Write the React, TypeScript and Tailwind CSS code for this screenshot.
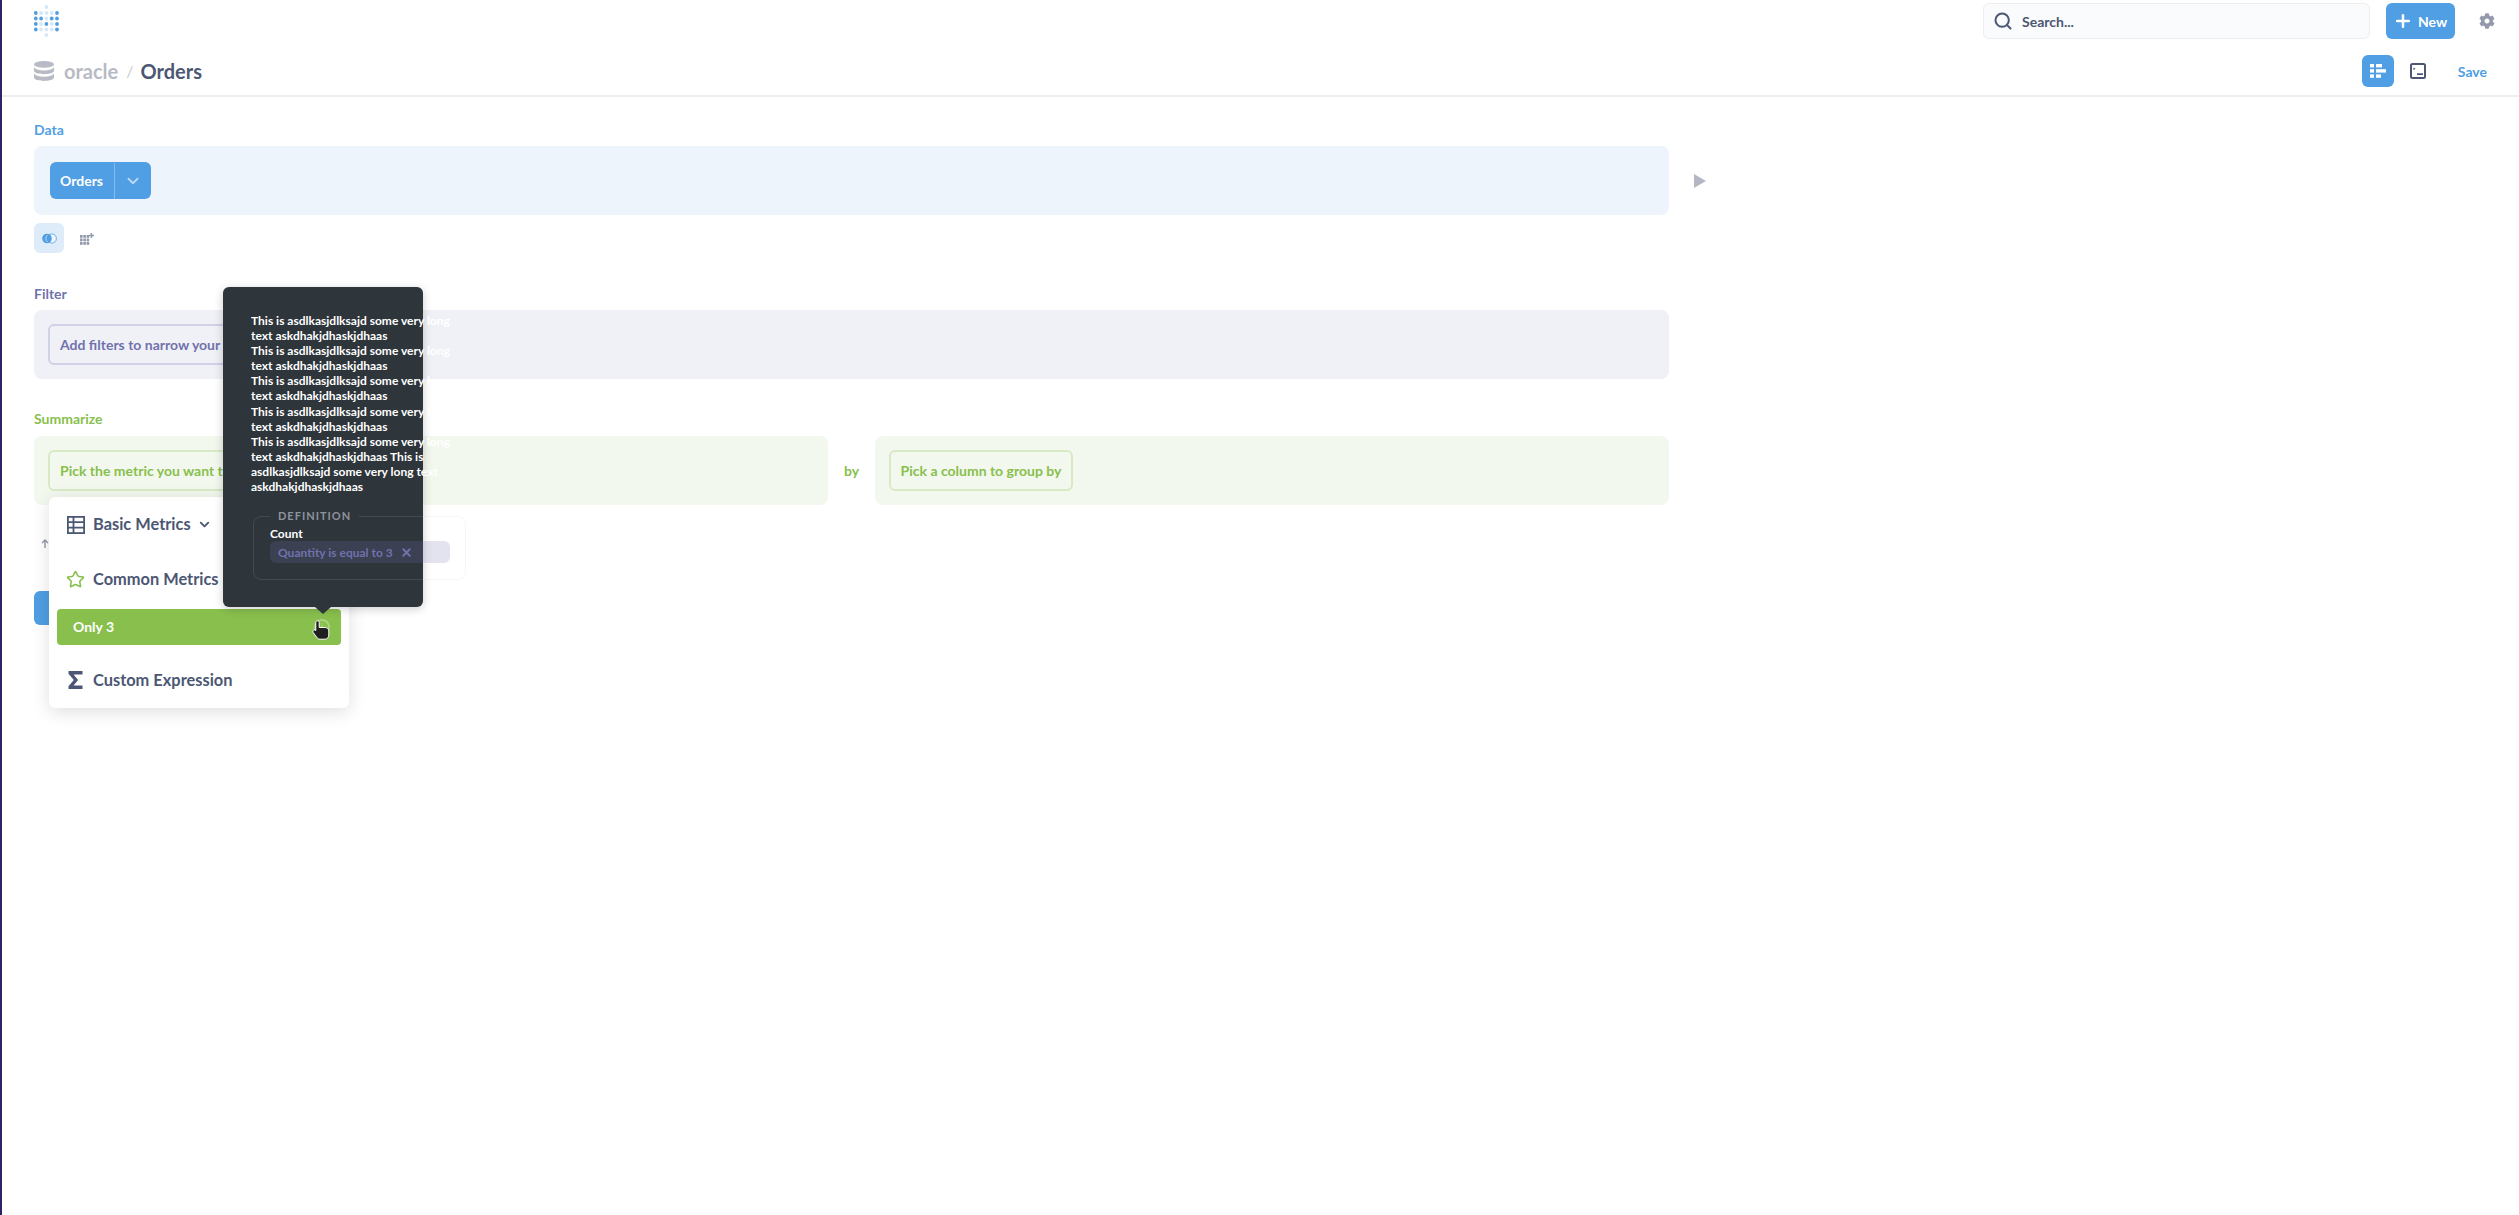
import { ChevronDown, Plus, Search, Star, X } from "lucide-react";
import { FaCog } from "react-icons/fa";

const LOGO_ROWS = [
  { y: 2, dots: [0, 0, 1, 0, 0] },
  { y: 8, dots: [2, 1, 1, 1, 2] },
  { y: 13.5, dots: [2, 2, 1, 2, 2] },
  { y: 19, dots: [2, 1, 2, 1, 2] },
  { y: 24.5, dots: [2, 1, 1, 1, 2] },
  { y: 30, dots: [0, 0, 1, 0, 0] },
];

const LOGO_X = [1.8, 7.1, 12.4, 17.7, 23];

const TOOLTIP_LINE = "This is asdlkasjdlksajd some very long text askdhakjdhaskjdhaas";

function Logo() {
  return (
    <svg width="25" height="32" viewBox="0 0 25 32" aria-label="Logo">
      {LOGO_ROWS.map((row) =>
        row.dots.map((dot, i) =>
          dot === 0 ? null : (
            <circle key={`${row.y}-${i}`} cx={LOGO_X[i]} cy={row.y} r="1.9" fill={dot === 2 ? "#509ee3" : "#d6e7f8"} />
          ),
        ),
      )}
    </svg>
  );
}

function DatabaseIcon() {
  return (
    <svg width="20" height="20" viewBox="0 0 20 20" fill="#b8bbc5">
      <ellipse cx="10" cy="3.4" rx="10" ry="3.4" />
      <path d="M0 6.2C1.6 8.4 5.6 9.4 10 9.4s8.400-1 10-3.200v3.600c0 1.900-4.500 3.400-10 3.400S0 11.700 0 9.800z" />
      <path d="M0 12.600c1.600 2.200 5.600 3.200 10 3.200s8.400-1 10-3.200v4c0 1.900-4.500 3.400-10 3.400S0 18.500 0 16.600z" />
    </svg>
  );
}

function NotebookIcon() {
  return (
    <svg width="16" height="14" viewBox="0 0 16 14" fill="#fff">
      <rect x="0" y="0" width="4" height="3.400" />
      <rect x="6" y="0" width="6" height="3.400" />
      <rect x="0" y="5.200" width="4" height="3.400" />
      <rect x="6" y="5.200" width="10" height="3.400" />
      <rect x="0" y="10.400" width="4" height="3.400" />
      <rect x="6" y="10.400" width="5" height="3.400" />
    </svg>
  );
}

function TerminalIcon() {
  return (
    <svg width="16" height="16" viewBox="0 0 16 16">
      <rect x="1" y="1" width="14" height="14" rx="1.500" fill="none" stroke="#4c5773" strokeWidth="2" />
      <path d="M3.500 4.200 5.500 5.700 3.500 7.200z" fill="#4c5773" />
      <rect x="7" y="10.300" width="6" height="1.700" fill="#4c5773" />
    </svg>
  );
}

function JoinIcon() {
  return (
    <svg width="15" height="11" viewBox="0 0 15 11">
      <circle cx="9.800" cy="5.500" r="4.600" fill="#f0f6fc" stroke="#6aaee8" strokeWidth="1" />
      <circle cx="5" cy="5.500" r="4.800" fill="#509ee3" />
      <path d="M5.600 1.900A4.600 4.600 0 0 0 5.600 9.100" fill="none" stroke="#d3e6f8" strokeWidth="0.800" />
    </svg>
  );
}

function ExpressionIcon() {
  return (
    <svg width="15" height="13" viewBox="0 0 15 13" fill="#949aab">
      {[3, 6.5, 10].map((y) =>
        [0, 3.3, 6.6].map((x) => <rect key={`${x}-${y}`} x={x} y={y} width="2.600" height="2.800" />),
      )}
      <path d="M10.700 2.800V1h1.500v1.800H14v1.400h-1.800V6h-1.500V4.200H9V2.800z" />
    </svg>
  );
}

function TableIcon() {
  return (
    <svg width="18" height="18" viewBox="0 0 18 18" fill="none" stroke="#4c5773" strokeWidth="1.800">
      <rect x="0.900" y="0.900" width="16.200" height="16.200" />
      <path d="M0.900 6.100h16.200M0.900 11.700h16.200M6.500 0.900v16.200" />
    </svg>
  );
}

function SigmaIcon() {
  return (
    <svg width="15" height="18" viewBox="0 0 15 18" fill="#4c5773">
      <path d="M0.500 0H14.500V3.400H5.600L10 9 5.600 14.600H14.500V18H0.500V15.200L5.800 9 0.500 2.800z" />
    </svg>
  );
}

function HandCursor() {
  return (
    <svg width="18" height="20" viewBox="0 0 18 20" className="absolute left-[310px] top-[620px] z-30">
      <path
        d="M5.500 0.800C6.500 0.800 7.200 1.500 7.200 2.500V7.500H13C15 7.500 16.800 9 16.800 11V15C16.800 17.500 15 19.200 13 19.200H8C6.500 19.200 5.500 18.500 4.500 17L1.200 12.500C0.600 11.600 0.900 10.600 1.600 10.200C2.400 9.700 3.200 10 3.800 10.700V2.500C3.800 1.500 4.500 0.800 5.500 0.800Z"
        fill="#1f1f1f"
        stroke="#fff"
        strokeWidth="1"
      />
    </svg>
  );
}

export default function App() {
  return (
    <div className="relative h-[1215px] w-full overflow-hidden border-l-2 border-l-[#2d2365] bg-white font-['Lato',sans-serif]">
      {/* Top nav */}
      <div className="flex h-[42px] items-center justify-between pl-[32px] pr-[24px]">
        <Logo />
        <div className="flex items-center">
          <div className="flex h-[36px] w-[387px] items-center rounded-md border border-[#eeeeee] bg-[#f9fbfc] pl-[9px]">
            <Search size={20} strokeWidth={2.4} className="text-[#4c5773]" />
            <span className="ml-[9px] text-[14px] font-bold text-[#4c5773]">Search...</span>
          </div>
          <button className="ml-[16px] flex h-[36px] w-[69px] items-center rounded-md bg-[#509ee3] pl-[7px] text-[14px] font-bold text-white">
            <Plus size={20} strokeWidth={3} />
            <span className="ml-[5px]">New</span>
          </button>
          <FaCog size={16} className="ml-[24px] text-[#949aab]" />
        </div>
      </div>

      {/* Question header */}
      <div className="flex h-[55px] items-center justify-between border-b-2 border-b-[#eeeeee] pl-[32px] pr-[32px] pt-[5px]">
        <div className="flex items-center text-[20px] font-bold">
          <DatabaseIcon />
          <span className="ml-[10px] text-[#b8bbc5]">oracle</span>
          <span className="ml-[8px] text-[16px] font-normal text-[#c9ccd4]">/</span>
          <span className="ml-[7px] text-[#4c5773]">Orders</span>
        </div>
        <div className="flex items-center">
          <button className="flex h-[32px] w-[32px] items-center justify-center rounded-md bg-[#509ee3]">
            <NotebookIcon />
          </button>
          <span className="ml-[16px] flex">
            <TerminalIcon />
          </span>
          <span className="ml-[32px] text-[14px] font-bold text-[#509ee3]">Save</span>
        </div>
      </div>

      {/* Notebook */}
      <div className="pl-[32px] pt-[23px]">
        <div className="text-[14px] font-bold leading-[20px] text-[#509ee3]">Data</div>
        <div className="mt-[6px] flex items-center">
          <div className="flex h-[69px] w-[1635px] items-center rounded-lg bg-[#edf4fb] pl-[16px]">
            <div className="flex h-[37px] w-[101px] items-center rounded-md bg-[#509ee3] text-[14px] font-bold text-white">
              <span className="w-[65px] border-r border-r-[#84bbec] pl-[10px] leading-[36px]">Orders</span>
              <ChevronDown size={18} strokeWidth={2.5} className="ml-[9px] text-[#b9d8f4]" />
            </div>
          </div>
          <svg width="12" height="14" viewBox="0 0 12 14" className="ml-[25px]" fill="#b4b7c3">
            <path d="M0 0 12 7 0 14z" />
          </svg>
        </div>
        <div className="mt-[8px] flex h-[30px] items-center">
          <div className="flex h-[30px] w-[30px] items-center justify-center rounded-md bg-[#deecf9]">
            <JoinIcon />
          </div>
          <span className="ml-[16px] flex">
            <ExpressionIcon />
          </span>
        </div>

        <div className="mt-[31px] text-[14px] font-bold leading-[20px] text-[#7172ad]">Filter</div>
        <div className="mt-[6px] flex h-[69px] w-[1635px] items-center rounded-lg bg-[#f0f1f6] pl-[14px]">
          <div className="flex h-[41px] items-center rounded-md border-2 border-[#d0d0e6] px-[10px] text-[14px] font-bold text-[#7172ad]">
            Add filters to narrow your answer
          </div>
        </div>

        <div className="mt-[30px] text-[14px] font-bold leading-[20px] text-[#88bf4d]">Summarize</div>
        <div className="mt-[7px] flex w-[1635px] items-center">
          <div className="flex h-[69px] w-[794px] items-center rounded-lg bg-[#f3f8ee] pl-[14px]">
            <div className="flex h-[41px] items-center rounded-md border-2 border-[#d8e9c6] px-[10px] text-[14px] font-bold text-[#88bf4d]">
              Pick the metric you want to see
            </div>
          </div>
          <span className="mx-auto text-[14px] font-bold text-[#88bf4d]">by</span>
          <div className="flex h-[69px] w-[794px] items-center rounded-lg bg-[#f3f8ee] pl-[14px]">
            <div className="flex h-[41px] w-[184px] items-center justify-center rounded-md border-2 border-[#d8e9c6] text-[14px] font-bold text-[#88bf4d]">
              Pick a column to group by
            </div>
          </div>
        </div>
        <div className="mt-[34px] flex h-[8px] pl-[7px] text-[#949aab]">
          <svg width="8" height="9" viewBox="0 0 8 9" fill="none" stroke="currentColor" strokeWidth="1.400">
            <path d="M4 9V1M1 4 4 1l3 3" />
          </svg>
        </div>
        <button className="mt-[44px] h-[34px] w-[120px] rounded-md bg-[#509ee3] text-[14px] font-bold text-white">Visualize</button>
      </div>

      {/* Metric picker */}
      <div className="absolute left-[47px] top-[497px] z-10 flex h-[211px] w-[300px] flex-col rounded-md bg-white text-[16.4px] font-bold text-[#4c5773] shadow-[0_4px_18px_rgba(0,0,0,0.13)]">
        <div className="flex h-[55px] items-center pl-[18px]">
          <TableIcon />
          <span className="ml-[8px]">Basic Metrics</span>
          <ChevronDown size={15} strokeWidth={3} className="ml-[6px]" />
        </div>
        <div className="flex h-[54px] items-center pl-[17px]">
          <Star size={19} strokeWidth={2} className="text-[#88bf4d]" />
          <span className="ml-[8px]">Common Metrics</span>
        </div>
        <div className="mx-[8px] mt-[3px] flex h-[36px] items-center justify-between rounded bg-[#88bf4d] pb-[1px] pl-[16px] pr-[11px] text-[14px] text-white">
          <span>Only 3</span>
          <span className="flex h-[16px] w-[16px] items-center justify-center rounded-full border-2 border-white/30 text-[9px] text-white/30">i</span>
        </div>
        <div className="mt-[8px] flex h-[54px] items-center pl-[19px]">
          <SigmaIcon />
          <span className="ml-[10px]">Custom Expression</span>
        </div>
      </div>

      {/* Metric tooltip */}
      <div className="absolute left-[221px] top-[287px] z-20 h-[320px] w-[200px] rounded-md bg-[#2e353b] pl-[28px] pt-[26px] text-[12px] font-bold leading-[15.1px] text-white shadow-[0_2px_10px_rgba(0,0,0,0.2)]">
        <div className="w-[204px]">
          {[0, 1, 2, 3].map((i) => (
            <div key={i}>{TOOLTIP_LINE}</div>
          ))}
          <div>
            {TOOLTIP_LINE} {TOOLTIP_LINE}
          </div>
        </div>
        <fieldset className="ml-[2px] mt-[15px] w-[213px] rounded-lg border border-[#c0c0c0]/15 pb-[16px] pl-[16px]">
          <legend className="px-[8px] text-[11px] uppercase leading-[14px] tracking-[1px] text-[#8d939c]">Definition</legend>
          <div className="mt-[3px] leading-[15px]">Count</div>
          <div className="flex h-[22px] w-[180px] items-center rounded-md bg-[#7172ad]/20 pl-[8px] text-[#7172ad]">
            <span>Quantity is equal to 3</span>
            <X size={13} strokeWidth={3.500} className="ml-[7px]" />
          </div>
        </fieldset>
        <div className="absolute left-[92px] top-[320px] h-0 w-0 border-x-[8px] border-t-[7px] border-x-transparent border-t-[#2e353b]" />
      </div>

      <HandCursor />
    </div>
  );
}
